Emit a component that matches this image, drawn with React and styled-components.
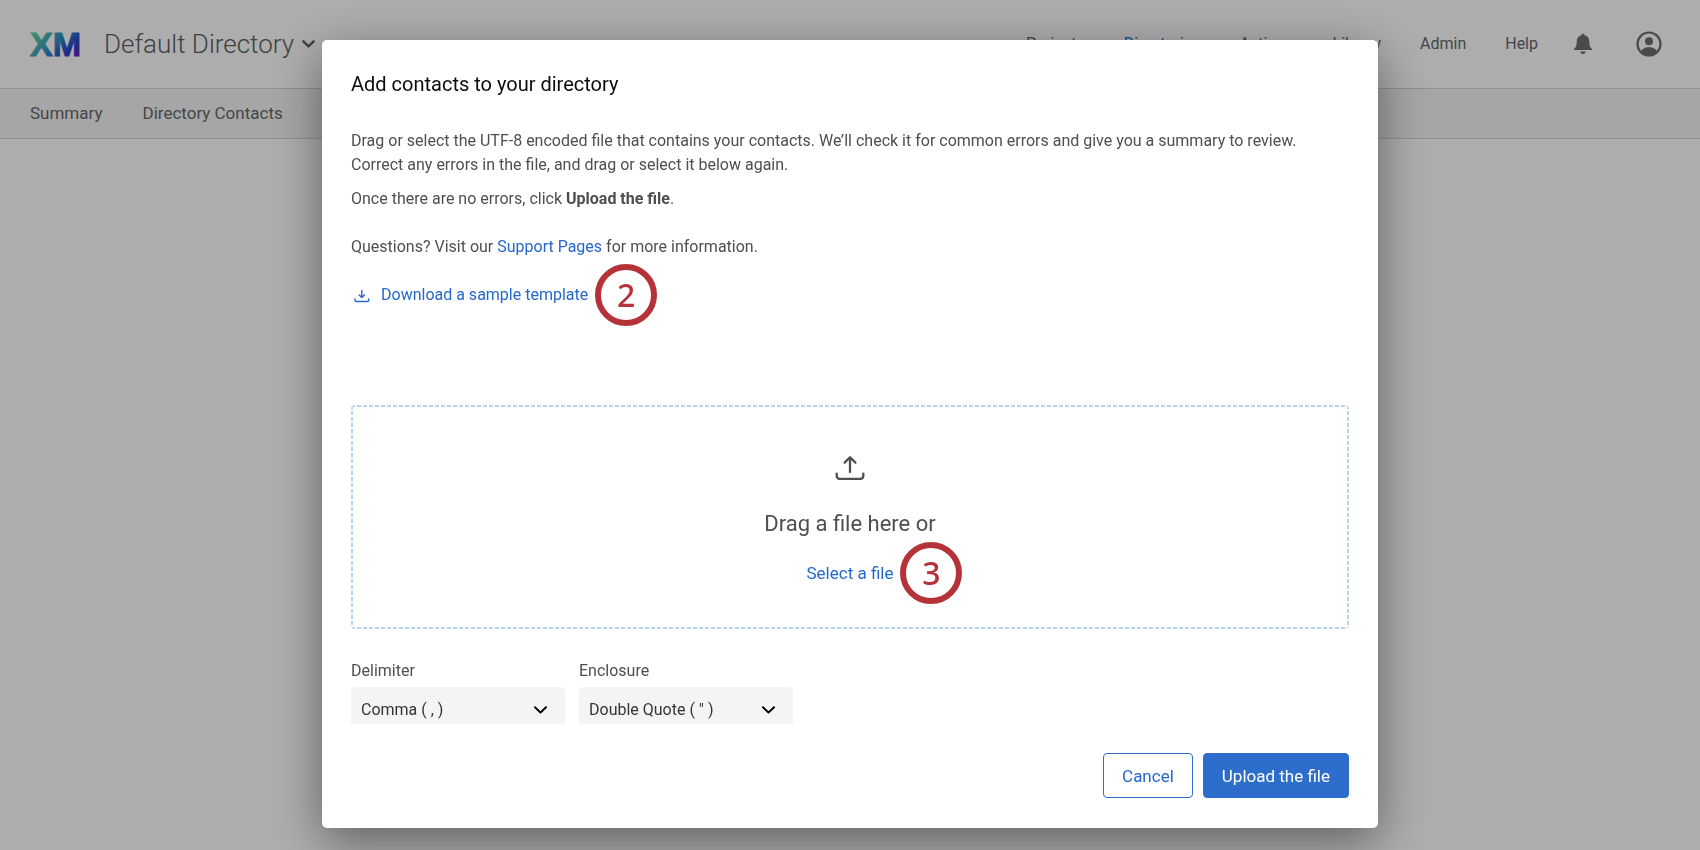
import React from 'react'
import styled, { createGlobalStyle } from 'styled-components'

const GlobalStyle = createGlobalStyle`
    * {
        box-sizing: border-box;
    }

    body {
        margin: 0;
        background: #ffffff;
        font-family: Roboto, 'Noto Sans', sans-serif;
        font-size: 16px;
        line-height: 24px;
        color: #4c4f53;
    }

    a {
        color: #2468cc;
        text-decoration: none;
    }

    button, select {
        font-family: inherit;
    }
`

const Page = styled.div`
    min-height: 100vh;
`

const Header = styled.header`
    display: flex;
    align-items: center;
    justify-content: space-between;
    height: 89px;
    padding: 0 38px 0 28px;
    border-bottom: 1px solid #d4d4d4;
`

const Brand = styled.div`
    display: flex;
    align-items: center;
    gap: 20px;
`

const DirectoryButton = styled.button`
    display: flex;
    align-items: center;
    gap: 8px;
    padding: 0;
    border: none;
    background: none;
    font-size: 26px;
    font-weight: 300;
    line-height: 32px;
    color: #5c5f62;
`

const HeaderRight = styled.div`
    display: flex;
    align-items: center;
    gap: 35px;
`

const MainNav = styled.nav`
    display: flex;
    align-items: center;
    gap: 39px;

    a {
        color: #65686b;
    }

    a.active {
        color: #1f6fc4;
    }
`

const HeaderIcons = styled.div`
    display: flex;
    align-items: center;
    gap: 43px;
`

const IconButton = styled.button`
    display: flex;
    padding: 0;
    border: none;
    background: none;
    color: #6b6e71;
`

const SubNav = styled.nav`
    display: flex;
    align-items: center;
    gap: 40px;
    height: 50px;
    padding: 0 30px 2px;
    background: #f5f5f5;
    border-bottom: 1px solid #d4d4d4;

    a {
        font-size: 17px;
        color: #65686b;
    }
`

const Overlay = styled.div`
    position: fixed;
    inset: 0;
    overflow: auto;
    padding: 40px 32px 22px;
    background: rgba(0, 0, 0, 0.32);
`

const Modal = styled.section`
    max-width: 1056px;
    margin: 0 auto;
    padding: 28px 29px 30px;
    background: #ffffff;
    border-radius: 5px;
    box-shadow: 0 14px 50px rgba(0, 0, 0, 0.45);
`

const Title = styled.h1`
    margin: 0 0 29px;
    font-size: 20px;
    line-height: 32px;
    font-weight: 400;
    color: #0c0d0e;
`

const Text = styled.p`
    margin: 0 0 ${props => props.$gap || 24}px;
`

const LinkRow = styled.div`
    display: flex;
`

const Anchor = styled.div`
    position: relative;
    display: flex;
    align-items: center;
`

const DownloadLink = styled.a`
    display: flex;
    align-items: center;
    gap: 10px;
    padding-left: 2px;
`

/* numbered step marker, floats beside the link it belongs to */
const Step = styled.span`
    position: absolute;
    left: calc(100% + 7px);
    top: 50%;
    display: flex;
    align-items: center;
    justify-content: center;
    width: 62px;
    height: 62px;
    margin-top: -31px;
    border: 6px solid #b53338;
    border-radius: 50%;
    background: #ffffff;
    font-family: 'Noto Sans', sans-serif;
    font-size: 32px;
    font-weight: 500;
    color: #b53338;
`

const dash = '#b9d3f2 0 4px, transparent 4px 6px'

/* short dashes are painted, a dashed border spaces them too far apart */
const DropZone = styled.div`
    display: flex;
    flex-direction: column;
    align-items: center;
    margin-top: 98px;
    padding: 50px 26px 44px;
    border-radius: 4px;
    background:
        repeating-linear-gradient(90deg, ${dash}) top / 100% 2px no-repeat,
        repeating-linear-gradient(90deg, ${dash}) bottom / 100% 2px no-repeat,
        repeating-linear-gradient(180deg, ${dash}) left / 2px 100% no-repeat,
        repeating-linear-gradient(180deg, ${dash}) right / 2px 100% no-repeat;
`

const DropText = styled.p`
    margin: 27px 0 21px;
    font-size: 22px;
    line-height: 32px;
`

const SelectFile = styled.button`
    padding: 0;
    border: none;
    background: none;
    font-size: 17px;
    line-height: 24px;
    color: #2468cc;
`

const Fields = styled.div`
    display: flex;
    gap: 14px;
    margin-top: 30px;
`

const Field = styled.div`
    display: flex;
    flex-direction: column;
    gap: 4px;
    width: 214px;
`

const SelectBox = styled.div`
    position: relative;

    select {
        display: block;
        width: 100%;
        height: 37px;
        padding: 8px 40px 0 10px;
        appearance: none;
        border: none;
        border-radius: 4px 4px 0 0;
        background: #f4f4f4;
        font-size: 16px;
        color: #32363a;
    }

    svg {
        position: absolute;
        right: 17px;
        top: 19px;
        color: #000000;
        pointer-events: none;
    }
`

const Footer = styled.footer`
    display: flex;
    justify-content: flex-end;
    gap: 10px;
    margin-top: 29px;
`

const Button = styled.button`
    height: 45px;
    padding: 0 18px;
    border: 1px solid #2d6dcb;
    border-radius: 4px;
    background: ${props => props.$primary ? '#2d6dcb' : '#ffffff'};
    font-size: 17px;
    color: ${props => props.$primary ? '#ffffff' : '#2468cc'};
`

const Logo = () => (
    <svg width='56' height='44' viewBox='0 0 56 44' aria-label='XM' role='img'>
        <defs>
            <linearGradient id='xm' gradientUnits='userSpaceOnUse' x1='10' y1='8' x2='44' y2='40'>
                <stop offset='0' stopColor='#62d09c' />
                <stop offset='0.45' stopColor='#3390c8' />
                <stop offset='0.75' stopColor='#2a48c8' />
                <stop offset='1' stopColor='#5a22c0' />
            </linearGradient>
        </defs>
        <text x='2' y='34' fill='url(#xm)' stroke='url(#xm)' strokeWidth='1' fontFamily='"Liberation Sans", sans-serif' fontWeight='700' fontSize='34'>XM</text>
    </svg>
)

const Chevron = ({ width, stroke }) => (
    <svg width={width} height='8' viewBox='0 0 14 8' fill='none' stroke='currentColor' strokeWidth={stroke} strokeLinecap='round' strokeLinejoin='round'>
        <path d='M1.5 1.2 7 6.6 12.5 1.2' />
    </svg>
)

const Bell = () => (
    <svg width='20' height='22' viewBox='0 0 20 22' fill='currentColor'>
        <path d='M10 .8c-.9 0-1.5.6-1.6 1.5C5.300 3 3.700 5.400 3.700 8.500c0 4.300-.7 5.400-2 6.800-.5.500-.9.900-.9 1.500v.3h18.400v-.3c0-.6-.4-1-.9-1.500-1.300-1.400-2-2.500-2-6.800 0-3.100-1.600-5.500-4.700-6.200C11.500 1.400 10.900.8 10 .8z' />
        <path d='M7.400 18.600h5.200a2.600 2.400 0 0 1-5.200 0z' />
    </svg>
)

const Avatar = () => (
    <svg width='26' height='26' viewBox='0 0 26 26'>
        <defs>
            <clipPath id='face'><circle cx='13' cy='13' r='11' /></clipPath>
        </defs>
        <circle cx='13' cy='13' r='11.500' fill='none' stroke='currentColor' strokeWidth='2.200' />
        <circle cx='13' cy='10.300' r='4' fill='currentColor' />
        <ellipse cx='13' cy='22.500' rx='8.600' ry='6.400' fill='currentColor' clipPath='url(#face)' />
    </svg>
)

const DownloadIcon = () => (
    <svg width='18' height='16' viewBox='0 0 18 16' fill='none' stroke='currentColor' strokeWidth='1.400' strokeLinecap='round' strokeLinejoin='round'>
        <path d='M8.800 3.500v7M6.200 8l2.600 2.600L11.400 8' />
        <path d='M2 12v1c0 1 .6 1.500 1.600 1.500h10.600c1 0 1.600-.5 1.600-1.500v-1' />
    </svg>
)

const UploadIcon = () => (
    <svg width='30' height='26' viewBox='0 0 30 26' fill='none' stroke='currentColor' strokeWidth='2.300' strokeLinecap='round' strokeLinejoin='round'>
        <path d='M15 17V2.400M9.600 7.600 15 2.200l5.400 5.400' />
        <path d='M1.700 18.600v2.200c0 2 1 3 3 3h20.600c2 0 3-1 3-3v-2.200' />
    </svg>
)

export default function App() {
    return (
        <>
            <GlobalStyle />
            <Page>
                <Header>
                    <Brand>
                        <Logo />
                        <DirectoryButton type='button'>
                            Default Directory
                            <Chevron width='13' stroke='2.600' />
                        </DirectoryButton>
                    </Brand>
                    <HeaderRight>
                        <MainNav>
                            <a href='#projects'>Projects</a>
                            <a href='#directories' className='active'>Directories</a>
                            <a href='#actions'>Actions</a>
                            <a href='#library'>Library</a>
                            <a href='#admin'>Admin</a>
                            <a href='#help'>Help</a>
                        </MainNav>
                        <HeaderIcons>
                            <IconButton type='button' aria-label='Notifications'><Bell /></IconButton>
                            <IconButton type='button' aria-label='Account'><Avatar /></IconButton>
                        </HeaderIcons>
                    </HeaderRight>
                </Header>
                <SubNav>
                    <a href='#summary'>Summary</a>
                    <a href='#contacts'>Directory Contacts</a>
                </SubNav>
            </Page>
            <Overlay>
                <Modal role='dialog' aria-labelledby='modal-title'>
                    <Title id='modal-title'>Add contacts to your directory</Title>
                    <Text $gap={10}>
                        Drag or select the UTF-8 encoded file that contains your contacts. We’ll check it for common errors and give you a summary to review. Correct any errors in the file, and drag or select it below again.
                    </Text>
                    <Text>Once there are no errors, click <b>Upload the file</b>.</Text>
                    <Text>Questions? Visit our <a href='#support'>Support Pages</a> for more information.</Text>
                    <LinkRow>
                        <Anchor>
                            <DownloadLink href='#template'>
                                <DownloadIcon />
                                Download a sample template
                            </DownloadLink>
                            <Step>2</Step>
                        </Anchor>
                    </LinkRow>
                    <DropZone>
                        <UploadIcon />
                        <DropText>Drag a file here or</DropText>
                        <Anchor>
                            <SelectFile type='button'>Select a file</SelectFile>
                            <Step>3</Step>
                        </Anchor>
                    </DropZone>
                    <Fields>
                        <Field>
                            <label htmlFor='delimiter'>Delimiter</label>
                            <SelectBox>
                                <select id='delimiter' defaultValue='comma'>
                                    <option value='comma'>Comma ( , )</option>
                                </select>
                                <Chevron width='15' stroke='2' />
                            </SelectBox>
                        </Field>
                        <Field>
                            <label htmlFor='enclosure'>Enclosure</label>
                            <SelectBox>
                                <select id='enclosure' defaultValue='double'>
                                    <option value='double'>Double Quote ( " )</option>
                                </select>
                                <Chevron width='15' stroke='2' />
                            </SelectBox>
                        </Field>
                    </Fields>
                    <Footer>
                        <Button type='button'>Cancel</Button>
                        <Button type='button' $primary>Upload the file</Button>
                    </Footer>
                </Modal>
            </Overlay>
        </>
    )
}
